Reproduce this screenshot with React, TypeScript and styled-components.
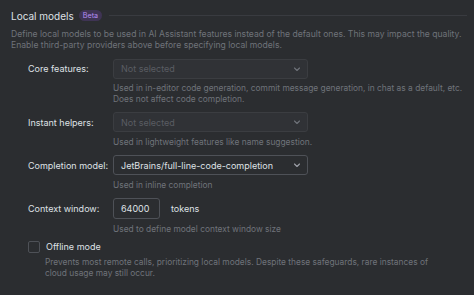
import React from "react";
import styled, { createGlobalStyle } from "styled-components";

const GlobalStyle = createGlobalStyle`
  html, body {
    margin: 0;
    padding: 0;
    background: #2b2d30;
  }
  body {
    font-family: Inter, "Noto Sans", sans-serif;
    -webkit-font-smoothing: antialiased;
  }
`;

const Page = styled.div`
  width: 474px;
  height: 295px;
  box-sizing: border-box;
  padding: 9px 7px 0 11px;
  background: #2b2d30;
  overflow: hidden;
`;

const Header = styled.div`
  display: flex;
  align-items: center;
  height: 13px;
  gap: 5px;
`;

const Title = styled.span`
  font-size: 10px;
  color: #dfe1e5;
`;

const Badge = styled.span`
  font-size: 7.2px;
  color: #b48df2;
  background: #3f3454;
  border-radius: 6px;
  padding: 1px 4px;
  line-height: 9px;
`;

const Separator = styled.div`
  flex: 1;
  height: 1px;
  background: #393b40;
  margin-left: 2px;
`;

const Description = styled.p`
  margin: 6.5px 0 0;
  font-size: 8.6px;
  line-height: 11px;
  color: #6f737a;
  white-space: nowrap;
`;

const Form = styled.div`
  display: grid;
  grid-template-columns: 85px auto;
  margin: 8px 0 0 17px;
`;

const Label = styled.div`
  font-size: 9px;
  color: #dfe1e5;
  height: 20px;
  display: flex;
  align-items: center;
  white-space: nowrap;
`;

const Field = styled.div<{ $last?: boolean }>`
  display: flex;
  flex-direction: column;
  margin-bottom: ${(p) => (p.$last ? "0" : "8px")};
`;

const Combo = styled.div<{ $disabled?: boolean }>`
  width: 195px;
  height: 20px;
  box-sizing: border-box;
  border: 1px solid ${(p) => (p.$disabled ? "#3b3d41" : "#4e5157")};
  background: ${(p) => (p.$disabled ? "#303236" : "#2b2d30")};
  border-radius: 3px;
  display: flex;
  align-items: center;
  justify-content: space-between;
  padding: 0 6px 0 7px;
  font-size: 9px;
  color: ${(p) => (p.$disabled ? "#5a5d63" : "#dfe1e5")};
`;

const Chevron = styled.svg<{ $disabled?: boolean }>`
  width: 8px;
  height: 8px;
  stroke: ${(p) => (p.$disabled ? "#6f737a" : "#9da0a8")};
`;

const Help = styled.div`
  font-size: 8.4px;
  line-height: 10.5px;
  color: #6f737a;
  margin-top: 4.5px;
  white-space: nowrap;
`;

const InputRow = styled.div`
  display: flex;
  align-items: center;
  gap: 11px;
`;

const NumberInput = styled.div`
  width: 47px;
  height: 21px;
  box-sizing: border-box;
  border: 1px solid #4e5157;
  border-radius: 3px;
  display: flex;
  align-items: center;
  padding-left: 7px;
  font-size: 9px;
  color: #dfe1e5;
`;

const Unit = styled.span`
  font-size: 9px;
  color: #dfe1e5;
`;

const CheckRow = styled.div`
  display: flex;
  align-items: center;
  gap: 6px;
  margin: 6.5px 0 0 17px;
`;

const Checkbox = styled.div`
  width: 12px;
  height: 12px;
  box-sizing: border-box;
  border: 1px solid #4e5157;
  border-radius: 2px;
`;

const CheckHelp = styled.div`
  font-size: 8.4px;
  line-height: 10.5px;
  color: #6f737a;
  margin: 4.5px 0 0 34px;
  white-space: nowrap;
`;

const ChevronIcon = ({ disabled }: { disabled?: boolean }) => (
  <Chevron $disabled={disabled} viewBox="0 0 8 8" fill="none" strokeWidth="1.1">
    <path d="M1.5 3 L4 5.5 L6.5 3" strokeLinecap="round" strokeLinejoin="round" />
  </Chevron>
);

const App = () => {
  return (
    <>
      <GlobalStyle />
      <Page>
        <Header>
          <Title>Local models</Title>
          <Badge>Beta</Badge>
          <Separator />
        </Header>
        <Description>
          Define local models to be used in AI Assistant features instead of the default ones. This may impact the quality.
          <br />
          Enable third-party providers above before specifying local models.
        </Description>

        <Form>
          <Label>Core features:</Label>
          <Field>
            <Combo $disabled>
              Not selected
              <ChevronIcon disabled />
            </Combo>
            <Help>
              Used in in-editor code generation, commit message generation, in chat as a default, etc.
              <br />
              Does not affect code completion.
            </Help>
          </Field>

          <Label>Instant helpers:</Label>
          <Field>
            <Combo $disabled>
              Not selected
              <ChevronIcon disabled />
            </Combo>
            <Help>Used in lightweight features like name suggestion.</Help>
          </Field>

          <Label>Completion model:</Label>
          <Field>
            <Combo>
              JetBrains/full-line-code-completion
              <ChevronIcon />
            </Combo>
            <Help>Used in inline completion</Help>
          </Field>

          <Label>Context window:</Label>
          <Field $last>
            <InputRow>
              <NumberInput>64000</NumberInput>
              <Unit>tokens</Unit>
            </InputRow>
            <Help>Used to define model context window size</Help>
          </Field>
        </Form>

        <CheckRow>
          <Checkbox />
          <Unit>Offline mode</Unit>
        </CheckRow>
        <CheckHelp>
          Prevents most remote calls, prioritizing local models. Despite these safeguards, rare instances of
          <br />
          cloud usage may still occur.
        </CheckHelp>
      </Page>
    </>
  );
};

export default App;
